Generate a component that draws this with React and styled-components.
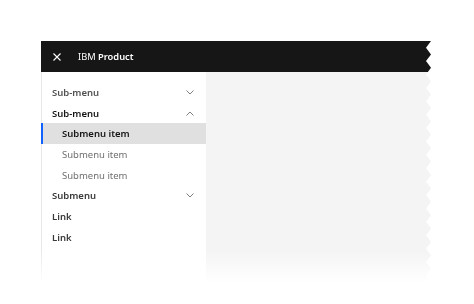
import React from 'react'
import styled, { createGlobalStyle } from 'styled-components'

const GlobalStyle = createGlobalStyle`
  html, body {
    margin: 0;
    padding: 0;
    background: #fff;
  }
  body {
    font-family: "Noto Sans", "Liberation Sans", sans-serif;
    -webkit-font-smoothing: antialiased;
  }
`

const SHELL_W = 390
const SHELL_H = 241
const TOOTH = 5
const PERIOD = 13.4

// torn right edge of the preview
const zigzag = () => {
  const pts = ['0 0']
  let y = 0
  let out = true
  while (y < SHELL_H) {
    pts.push(`${out ? SHELL_W : SHELL_W - TOOTH}px ${y}px`)
    y += PERIOD / 2
    out = !out
  }
  pts.push(`${SHELL_W}px ${SHELL_H}px`, `0 ${SHELL_H}px`)
  return `polygon(${pts.join(', ')})`
}

const Page = styled.div`
  padding: 41px 0 0 41px;
  width: 474px;
  height: 304px;
  box-sizing: border-box;
`

const Shell = styled.div`
  width: ${SHELL_W}px;
  height: ${SHELL_H}px;
  display: flex;
  flex-direction: column;
  clip-path: ${zigzag()};
  mask-image: linear-gradient(to bottom, #000 87%, transparent 100%);
  -webkit-mask-image: linear-gradient(to bottom, #000 87%, transparent 100%);
`

const Header = styled.header`
  height: 31px;
  flex: none;
  display: flex;
  align-items: center;
  background: #161616;
  color: #fff;
`

const MenuButton = styled.div`
  width: 31px;
  height: 31px;
  display: flex;
  align-items: center;
  justify-content: center;
`

const Brand = styled.div`
  margin-left: 6px;
  font-size: 9.3px;

  strong {
    font-weight: 600;
  }
`

const Body = styled.div`
  flex: 1;
  display: flex;
`

const SideNav = styled.nav`
  width: 165px;
  flex: none;
  box-sizing: border-box;
  border-left: 1px solid #e8e8e8;
  background: #fff;
  padding-top: 10px;
`

const NavRow = styled.div`
  height: 20.7px;
  display: flex;
  align-items: center;
  justify-content: space-between;
  box-sizing: border-box;
  padding: 0 12px 0 ${p => (p.$indent ? 20 : 10)}px;
  font-size: 9.5px;
  font-weight: ${p => (p.$light ? 400 : 600)};
  color: ${p => p.$color || '#525252'};
  background: ${p => (p.$selected ? '#e0e0e0' : 'transparent')};
  ${p => p.$selected && `
    margin-left: -1px;
    border-left: 2px solid #0f62fe;
    padding-left: 19px;
  `}
`

const Content = styled.main`
  flex: 1;
  background: #f4f4f4;
`

const Close = () => (
  <svg width="8" height="8" viewBox="0 0 8 8">
    <path d="M0.5 0.5 L7.5 7.5 M7.5 0.5 L0.5 7.5" stroke="#fff" strokeWidth="1.1" />
  </svg>
)

const Chevron = ({ up }) => (
  <svg width="8" height="5" viewBox="0 0 8 5">
    <path
      d={up ? 'M0.5 4.5 L4 1 L7.5 4.5' : 'M0.5 0.5 L4 4 L7.5 0.5'}
      fill="none"
      stroke="#6f6f6f"
      strokeWidth="0.9"
    />
  </svg>
)

const items = [
  { label: 'Sub-menu', chevron: 'down' },
  { label: 'Sub-menu', chevron: 'up', color: '#161616' },
  { label: 'Submenu item', indent: true, selected: true, color: '#161616' },
  { label: 'Submenu item', indent: true, light: true, color: '#6f6f6f' },
  { label: 'Submenu item', indent: true, light: true, color: '#6f6f6f' },
  { label: 'Submenu', chevron: 'down', color: '#393939' },
  { label: 'Link', color: '#393939' },
  { label: 'Link', color: '#393939' },
]

export default function App() {
  return (
    <Page>
      <GlobalStyle />
      <Shell>
        <Header>
          <MenuButton>
            <Close />
          </MenuButton>
          <Brand>
            IBM <strong>Product</strong>
          </Brand>
        </Header>
        <Body>
          <SideNav>
            {items.map((it, i) => (
              <NavRow
                key={i}
                $indent={it.indent}
                $selected={it.selected}
                $light={it.light}
                $color={it.color}
              >
                <span>{it.label}</span>
                {it.chevron && <Chevron up={it.chevron === 'up'} />}
              </NavRow>
            ))}
          </SideNav>
          <Content />
        </Body>
      </Shell>
    </Page>
  )
}
